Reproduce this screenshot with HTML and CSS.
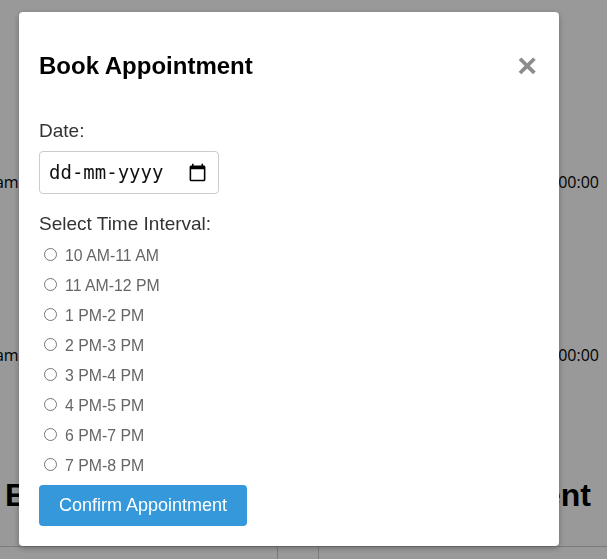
FILE: index.html
```html
<!DOCTYPE html>
<html lang="en">
<head>
<meta charset="utf-8">
<title>Book Appointment</title>
<link rel="stylesheet" href="styles.css">
</head>
<body>
<main class="page">
  <div class="row row-first"><span>10:00 am</span><span>10:00:00</span></div>
  <div class="row row-second"><span>11:00 am</span><span>11:00:00</span></div>
  <div class="heading"><span>Edit</span><span>Appointment</span></div>
  <div class="table-row"><div class="cell cell-a"></div><div class="cell cell-b"></div><div class="cell cell-c"></div></div>
</main>
<div class="overlay">
  <form class="modal">
    <div class="modal-head">
      <h2 class="title">Book Appointment</h2>
      <span class="close">×</span>
    </div>
    <div class="field-label">Date:</div>
    <div class="date">
      <span class="date-text">dd-mm-yyyy</span>
      <svg class="date-icon" viewBox="0 0 24 24" aria-hidden="true"><path d="M20 3h-1V1h-2v2H7V1H5v2H4c-1.1 0-2 .9-2 2v16c0 1.1.9 2 2 2h16c1.1 0 2-.9 2-2V5c0-1.1-.9-2-2-2zm0 18H4V8h16v13z"/></svg>
    </div>
    <div class="interval-label">Select Time Interval:</div>
    <div class="options">
      <label class="option"><input type="radio" name="slot"><span>10 AM-11 AM</span></label>
      <label class="option"><input type="radio" name="slot"><span>11 AM-12 PM</span></label>
      <label class="option"><input type="radio" name="slot"><span>1 PM-2 PM</span></label>
      <label class="option"><input type="radio" name="slot"><span>2 PM-3 PM</span></label>
      <label class="option"><input type="radio" name="slot"><span>3 PM-4 PM</span></label>
      <label class="option"><input type="radio" name="slot"><span>4 PM-5 PM</span></label>
      <label class="option"><input type="radio" name="slot"><span>6 PM-7 PM</span></label>
      <label class="option"><input type="radio" name="slot"><span>7 PM-8 PM</span></label>
    </div>
    <button class="confirm" type="button">Confirm Appointment</button>
  </form>
</div>
</body>
</html>
```
FILE: styles.css
```css
* { box-sizing: border-box; }
html, body { margin: 0; height: 100%; overflow: hidden; }
body { background: #fff; font-family: "Liberation Sans", Arial, sans-serif; color: #000; }
.page { height: 559px; display: flex; flex-direction: column; overflow: hidden; }
.row { display: flex; justify-content: space-between; padding: 0 8px 0 0; font-size: 16px; line-height: 20px; font-family: "Open Sans", sans-serif; }
.row span:first-child { margin-left: -50px; }
.row-first { margin-top: 172px; }
.row-second { margin-top: 153px; }
.heading { display: flex; justify-content: space-between; margin-top: 110px; padding: 0 16px 0 5px; font-size: 32px; font-weight: 700; line-height: 40px; }
.table-row { display: flex; margin-top: 31px; height: 13px; border-top: 1px solid #ccc; }
.cell-a { width: 278px; border-right: 1px solid #ccc; border-top-right-radius: 3px; }
.cell-b { width: 41px; border-right: 1px solid #ccc; }
.cell-c { flex: 1; }
.overlay { position: fixed; inset: 0; background: rgba(0, 0, 0, 0.4); padding: 12px 48px 13px 19px; }
.modal { background: #fff; height: 534px; border-radius: 4px; padding: 20px; box-shadow: 0 2px 6px rgba(0, 0, 0, 0.3); display: flex; flex-direction: column; align-items: flex-start; }
.modal-head { width: 100%; display: flex; justify-content: space-between; align-items: center; height: 68px; }
.title { margin: 0; font-size: 24px; font-weight: 700; line-height: 28px; }
.close { font-size: 34px; font-weight: 700; color: #8c8c8c; line-height: 28px; margin-right: 2px; padding-bottom: 3px; }
.field-label { margin-top: 20px; font-size: 19px; line-height: 21px; color: #333; }
.date { margin-top: 10px; width: 180px; height: 43px; padding: 0 11px 0 9px; border: 1px solid #ccc; border-radius: 4px; background: #fff; display: flex; align-items: center; justify-content: space-between; }
.date-text { font-family: "DejaVu Sans Mono", monospace; font-size: 19px; color: #111; padding-bottom: 2px; }
.date-icon { width: 19px; height: 19px; display: block; }
.interval-label { margin-top: 19px; font-size: 19px; line-height: 21px; color: #333; }
.options { display: flex; flex-direction: column; width: 100%; margin-top: 5px; }
.option { display: flex; align-items: center; height: 30px; font-size: 15.85px; color: #666; }
.option input { margin: 0 8px 0 5px; width: 13px; height: 13px; }
.option span { padding-top: 4px; }
.confirm { margin-top: 6px; width: 208px; height: 41px; border: 0; border-radius: 4px; background: #3498db; color: #fff; font-family: inherit; font-size: 18px; padding: 0; }
```
